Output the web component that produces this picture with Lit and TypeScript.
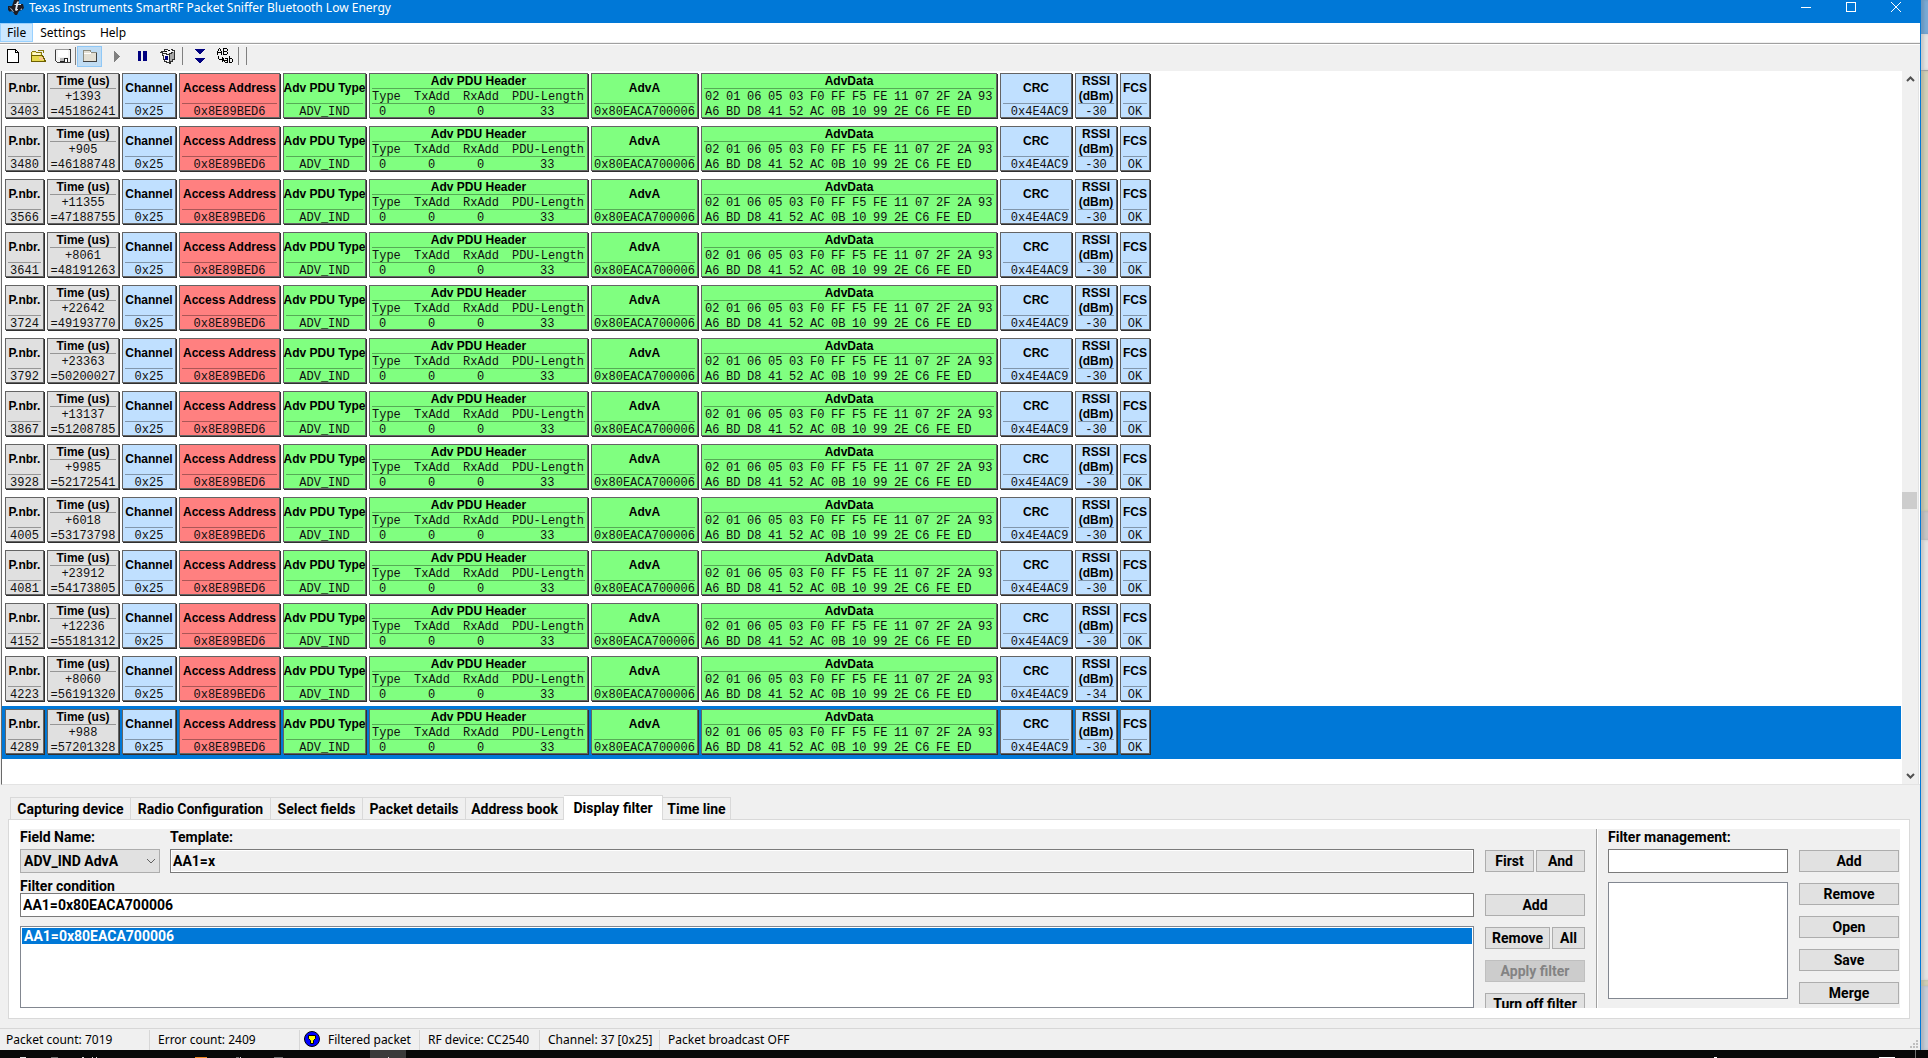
import { LitElement, html, css, svg } from "lit";
import { customElement, property, state } from "lit/decorators.js";
import { classMap } from "lit/directives/class-map.js";

interface Packet {
  nbr: string;
  delta: string;
  time: string;
  rssi: string;
}

const PACKETS: Packet[] = [
  { nbr: "3403", delta: "+1393", time: "=45186241", rssi: "-30" },
  { nbr: "3480", delta: "+905", time: "=46188748", rssi: "-30" },
  { nbr: "3566", delta: "+11355", time: "=47188755", rssi: "-30" },
  { nbr: "3641", delta: "+8061", time: "=48191263", rssi: "-30" },
  { nbr: "3724", delta: "+22642", time: "=49193770", rssi: "-30" },
  { nbr: "3792", delta: "+23363", time: "=50200027", rssi: "-30" },
  { nbr: "3867", delta: "+13137", time: "=51208785", rssi: "-30" },
  { nbr: "3928", delta: "+9985", time: "=52172541", rssi: "-30" },
  { nbr: "4005", delta: "+6018", time: "=53173798", rssi: "-30" },
  { nbr: "4081", delta: "+23912", time: "=54173805", rssi: "-30" },
  { nbr: "4152", delta: "+12236", time: "=55181312", rssi: "-30" },
  { nbr: "4223", delta: "+8060", time: "=56191320", rssi: "-34" },
  { nbr: "4289", delta: "+988", time: "=57201328", rssi: "-30" },
];

const ADV_DATA = [
  "02 01 06 05 03 F0 FF F5 FE 11 07 2F 2A 93",
  "A6 BD D8 41 52 AC 0B 10 99 2E C6 FE ED",
];

const PDU_HEADER = ["Type TxAdd RxAdd PDU-Length", "0 0 0 33"];

const TABS = [
  "Capturing device",
  "Radio Configuration",
  "Select fields",
  "Packet details",
  "Address book",
  "Display filter",
  "Time line",
];

const icon = (body: unknown) => html`<svg
  class="icon"
  width="16"
  height="16"
  viewBox="0 0 16 16"
  shape-rendering="crispEdges"
  aria-hidden="true"
>${body}</svg>`;

const ICONS = {
  blank: svg`<path d="M2.500 1.500h8l3 3v10h-11z" fill="#fff" stroke="#000"/><path d="M10.500 1.500v3h3" fill="none" stroke="#000"/>`,
  open: svg`<path d="M1.500 13.500v-9l1-1h3l1 1h5v3" fill="#f4ea8c" stroke="#8a7a10"/><path d="M1.500 13.500v-6h11l3 6z" fill="#e6d84c" stroke="#6e6000"/><path d="M9 9h4l1 3h-4z" fill="#f7c890"/><path d="M3 5h7v2h-7z" fill="#fffbd0"/><path d="M8 2.500h5v2" fill="none" stroke="#8a7a10"/>`,
  save: svg`<path d="M.500 1.500h15v13h-13l-2-2z" fill="#f4f4f4" stroke="#3c3c3c"/><path d="M3 2h10v7h-10z" fill="#fff"/><path d="M0 1h14v1h-14z" fill="#9a9a9a"/><path d="M5 10h8v4h-8z" fill="#202020"/><path d="M10 11h2v3h-2z" fill="#fff"/><path d="M5 10h4v3h-4z" fill="#b8b8b8"/>`,
  folder: svg`<path d="M1.500 13v-10l1-1h5l1 1v1h6v9z" fill="#e4e0d4" stroke="#8c8c80"/><path d="M2 5.500h6v-2" fill="none" stroke="#fff"/><path d="M1 13.500h13.500v-9" fill="none" stroke="#404040"/>`,
  play: svg`<path d="M5 3h1v1h1v1h1v1h1v1h1v1h1v1h-1v1h-1v1h-1v1h-1v1h-1v1h-1z" fill="#808080"/>`,
  pause: svg`<path d="M4 3h3v10h-3zM9 3h4v10h-4z" fill="#000080"/>`,
  clear: svg`<path d="M1 4l5-3h6l3 3v8l-5 3-7-3z" fill="#f4f4f4"/><path d="M10 6l5-2v8l-5 3z" fill="#a8a8a8"/><path d="M1 4.500h2v3h1v4h1v2h2v1h3M2 3.500h3v-2h4M12 1.500h1v1h2v9h-2v2h-2v2h-1V7M4 5.500h3v1h3v-1h2v-1h2" fill="none" stroke="#303030"/><path d="M6 8h3v4h-3z" fill="#000080"/><path d="M6 3.500h2M9 2.500h2" stroke="#000"/>`,
  down: svg`<path d="M3 1h10v1h-1v1h-1v1h-1v1h-1v1h-2v-1h-1v-1h-1v-1h-1v-1h-1zM3 10h10v1h-1v1h-1v1h-1v1h-1v1h-2v-1h-1v-1h-1v-1h-1v-1h-1z" fill="#000080"/>`,
  swap: svg`<path d="M.500 7V3M1.500 3V1M2.500 0v1M3.500 1v2M4.500 3v4M1 4.500h3M6.500 0v7M7 .500h3M10.500 1v2M7 3.500h3M10.500 4v2M7 6.500h3" fill="none" stroke="#000"/><path d="M1.500 8v3M2 11.500h5M5.500 9v5M6.500 10v3" fill="none" stroke="#000"/><path d="M8 10.500h2M10.500 10v5M8 14.500h2M7.500 12v2M8 12.500h2M12.500 8v7M13 10.500h2M15.500 11v3M13 14.500h2" fill="none" stroke="#000"/>`,
};

@customElement("packet-field")
export class PacketField extends LitElement {
  static styles = css`
    :host {
      display: block;
      box-sizing: border-box;
      height: 45px;
      border: 1px solid #646464;
      box-shadow: 1px 1px 0 #303030;
      color: #000;
      background: #e0e0e0;
    }
    :host([tone="blue"]) { background: #c0e0ff; }
    :host([tone="red"]) { background: #ff8080; }
    :host([tone="green"]) { background: #80ff80; }
    .name {
      display: flex;
      align-items: center;
      justify-content: center;
      height: 29px;
      margin: 0 2px;
      border-bottom: 1px solid rgba(0, 0, 0, 0.33);
      font: bold 12px/15px "Liberation Sans", Arial, sans-serif;
      text-align: center;
      white-space: pre;
    }
    .short { height: 14px; }
    .line {
      display: flex;
      justify-content: center;
      height: 15px;
      margin: 0 2px;
      font: 12px/17px "Liberation Mono", "Courier New", monospace;
      color: #101010;
      white-space: pre;
    }
    .bytes {
      display: grid;
      grid-template-columns: repeat(14, 21px);
      justify-content: start;
      padding-left: 1px;
    }
    .header {
      display: grid;
      grid-template-columns: 42px 49px 49px 72px;
      justify-content: start;
    }
    .header.values span { padding-left: 14px; }
    .header.values span:first-child { padding-left: 7px; }
    .header.values span:last-child { padding-left: 28px; }
    .ruled {
      box-sizing: border-box;
      border-bottom: 1px solid rgba(0, 0, 0, 0.33);
    }
  `;

  @property() name = "";
  @property({ reflect: true }) tone = "grey";
  @property() layout = "plain";
  @property({ attribute: false }) lines: string[] = [];

  render() {
    const two = this.lines.length > 1;
    const columns = this.layout !== "plain";
    const header = this.layout === "header";
    return html`<div class=${classMap({ name: true, short: two })}>${this.name}</div>
      ${this.lines.map(
        (text, i) => html`<div
          class=${classMap({
            line: true,
            bytes: this.layout === "bytes",
            header,
            values: header && i > 0,
            ruled: header && i === 0,
          })}
        >${columns ? text.split(" ").map((t) => html`<span>${t}</span>`) : text}</div>`
      )}`;
  }
}

@customElement("packet-list")
export class PacketList extends LitElement {
  static styles = css`
    :host {
      display: flex;
      flex: 1;
      min-height: 0;
      background: #fff;
      border-left: 1px solid #696969;
      margin-left: 1px;
      border-bottom: 1px solid #e3e3e3;
      box-sizing: border-box;
    }
    .rows {
      flex: 1;
      min-width: 0;
      overflow: hidden;
      padding-right: 1px;
    }
    table {
      width: 100%;
      table-layout: fixed;
      border-collapse: collapse;
    }
    td { padding: 3px 3px 5px 0; }
    td:first-child { padding-left: 3px; }
    tr:first-child td { padding-top: 2px; }
    .selected { background: #0078d7; }
    .w-nbr { width: 45px; }
    .w-time { width: 75px; }
    .w-channel { width: 57px; }
    .w-access { width: 104px; }
    .w-type { width: 86px; }
    .w-header { width: 222px; }
    .w-adva { width: 110px; }
    .w-data { width: 299px; }
    .w-crc { width: 75px; }
    .w-rssi { width: 45px; }
    .w-fcs { width: 33px; }
    .scroll {
      display: flex;
      flex-direction: column;
      width: 16px;
      background: #f0f0f0;
      border-right: 1px solid #e3e3e3;
      margin-right: 1px;
    }
    .scroll button {
      height: 17px;
      padding: 0;
      border: 0;
      background: none;
      line-height: 0;
    }
    .track {
      display: flex;
      flex-direction: column;
      flex: 1;
    }
    .before { flex: 404; }
    .thumb {
      height: 17px;
      width: 15px;
      background: #cdcdcd;
    }
    .after { flex: 258; }
  `;

  @state() private selected = "4289";

  private row(p: Packet) {
    return html`<tr
      class=${classMap({ selected: p.nbr === this.selected })}
      @click=${() => (this.selected = p.nbr)}
    >
      <td><packet-field name="P.nbr." .lines=${[p.nbr]}></packet-field></td>
      <td><packet-field name="Time (us)" .lines=${[p.delta, p.time]}></packet-field></td>
      <td><packet-field tone="blue" name="Channel" .lines=${["0x25"]}></packet-field></td>
      <td><packet-field tone="red" name="Access Address" .lines=${["0x8E89BED6"]}></packet-field></td>
      <td><packet-field tone="green" name="Adv PDU Type" .lines=${["ADV_IND"]}></packet-field></td>
      <td><packet-field tone="green" name="Adv PDU Header" layout="header" .lines=${PDU_HEADER}></packet-field></td>
      <td><packet-field tone="green" name="AdvA" .lines=${["0x80EACA700006"]}></packet-field></td>
      <td><packet-field tone="green" name="AdvData" layout="bytes" .lines=${ADV_DATA}></packet-field></td>
      <td><packet-field tone="blue" name="CRC" .lines=${[" 0x4E4AC9"]}></packet-field></td>
      <td><packet-field tone="blue" name=${"RSSI\n(dBm)"} .lines=${[p.rssi]}></packet-field></td>
      <td><packet-field tone="blue" name="FCS" .lines=${["OK"]}></packet-field></td>
      <td></td>
    </tr>`;
  }

  render() {
    return html`<div class="rows">
        <table aria-label="Packets">
          <colgroup>
            <col class="w-nbr" /><col class="w-time" /><col class="w-channel" />
            <col class="w-access" /><col class="w-type" /><col class="w-header" />
            <col class="w-adva" /><col class="w-data" /><col class="w-crc" />
            <col class="w-rssi" /><col class="w-fcs" /><col />
          </colgroup>
          <tbody>${PACKETS.map((p) => this.row(p))}</tbody>
        </table>
      </div>
      <div class="scroll">
        <button aria-label="Scroll up">
          <svg width="15" height="17" viewBox="0 0 15 17"><path d="M4 10l3.500-3.500 3.500 3.500" fill="none" stroke="#505050" stroke-width="2"/></svg>
        </button>
        <div class="track"><div class="before"></div><div class="thumb"></div><div class="after"></div></div>
        <button aria-label="Scroll down">
          <svg width="15" height="17" viewBox="0 0 15 17"><path d="M4 7l3.500 3.500 3.500-3.500" fill="none" stroke="#505050" stroke-width="2"/></svg>
        </button>
      </div>`;
  }
}

@customElement("filter-panel")
export class FilterPanel extends LitElement {
  static styles = css`
    :host {
      display: block;
      padding: 10px 10px 9px 8px;
      font: bold 14px/16px Roboto, "Liberation Sans", sans-serif;
      color: #000;
    }
    .tabs {
      display: flex;
      align-items: flex-end;
      height: 24px;
      padding-left: 2px;
    }
    .tab {
      box-sizing: border-box;
      height: 22px;
      padding: 1px 4px 0;
      border: 1px solid #d9d9d9;
      border-width: 1px 1px 0 0;
      background: #f0f0f0;
      font: inherit;
      color: inherit;
      text-align: center;
      white-space: nowrap;
    }
    .tab:first-child { border-left-width: 1px; }
    .w0 { width: 121px; }
    .w1 { width: 140px; }
    .w2 { width: 92px; }
    .w3 { width: 103px; }
    .w4 { width: 98px; }
    .w5 { width: 99px; }
    .w6 { width: 68px; }
    .active {
      height: 25px;
      margin-bottom: -1px;
      padding-bottom: 2px;
      background: #fff;
      z-index: 1;
    }
    .panel {
      border: 1px solid #d9d9d9;
      background: #fff;
      padding: 9px 9px 10px 11px;
    }
    .content {
      display: flex;
      height: 179px;
      overflow: hidden;
      background: #f0f0f0;
    }
    .conditions {
      flex: 1;
      min-width: 0;
      display: flex;
      flex-direction: column;
    }
    .pair { display: flex; gap: 10px; }
    .grow { flex: 1; min-width: 0; }
    .field { display: flex; flex-direction: column; }
    label { display: block; height: 20px; line-height: 17px; }
    .second { padding-top: 4px; height: 16px; line-height: 18px; }
    .combo { display: grid; width: 140px; }
    .combo > * { grid-area: 1 / 1; }
    .combo svg { align-self: center; justify-self: end; margin-right: 4px; pointer-events: none; }
    select, input {
      box-sizing: border-box;
      width: 100%;
      height: 24px;
      margin: 0;
      border: 1px solid #7a7a7a;
      border-radius: 0;
      padding: 0 2px 1px;
      background: #fff;
      font: inherit;
      color: inherit;
      outline: 0;
    }
    select {
      appearance: none;
      border-color: #adadad;
      background: #e1e1e1;
      padding: 0 3px;
    }
    input[readonly] { background: #f0f0f0; box-shadow: inset 0 0 0 1px #fff; }
    ul {
      box-sizing: border-box;
      flex: 1;
      margin: 9px 0 0;
      padding: 1px;
      list-style: none;
      border: 1px solid #828790;
      background: #fff;
    }
    li { padding: 0 2px; height: 16px; line-height: 17px; background: #0078d7; color: #fff; }
    .actions {
      display: flex;
      flex-direction: column;
      gap: 11px;
      width: 100px;
      padding: 21px 11px 0;
    }
    .row { display: flex; gap: 2px; }
    .row:first-child { margin-bottom: 11px; }
    .actions button {
      box-sizing: border-box;
      flex: 1 1 0;
      height: 22px;
      padding: 0;
      border: 1px solid #adadad;
      background: #e1e1e1;
      font: inherit;
      color: inherit;
    }
    .actions button.stack { flex: none; }
    .actions button.narrow { flex: 0 0 33px; }
    .actions button:disabled { background: #ccc; border-color: #bfbfbf; color: #838383; }
    .management {
      display: flex;
      border-left: 1px solid #a0a0a0;
      box-shadow: inset 1px 0 0 #fff;
      padding-left: 11px;
    }
    .saved { display: flex; flex-direction: column; width: 180px; padding-bottom: 9px; }
    .management .actions { padding-right: 1px; }
  `;

  @state() private tab = 5;
  @state() private condition = "AA1=0x80EACA700006";

  render() {
    return html`<div class="tabs" role="tablist">
        ${TABS.map(
          (name, i) => html`<button
            role="tab"
            aria-selected=${i === this.tab}
            class=${`tab w${i}${i === this.tab ? " active" : ""}`}
            @click=${() => (this.tab = i)}
          >${name}</button>`
        )}
      </div>
      <div class="panel" role="tabpanel">
        <div class="content">
          <div class="conditions">
            <div class="pair">
              <div class="field">
                <label for="field">Field Name:</label>
                <div class="combo">
                  <select id="field"><option>ADV_IND AdvA</option></select>
                  <svg width="10" height="6" viewBox="0 0 10 6"><path d="M1 1l4 4 4-4" fill="none" stroke="#606060"/></svg>
                </div>
              </div>
              <div class="field grow">
                <label for="template">Template:</label>
                <input id="template" readonly value="AA1=x" />
              </div>
            </div>
            <label class="second" for="condition">Filter condition</label>
            <input
              id="condition"
              .value=${this.condition}
              @input=${(e: Event) => (this.condition = (e.target as HTMLInputElement).value)}
            />
            <ul role="listbox" aria-label="Filter conditions">
              <li role="option" aria-selected="true">AA1=0x80EACA700006</li>
            </ul>
          </div>
          <div class="actions">
            <div class="row"><button>First</button><button>And</button></div>
            <button class="stack">Add</button>
            <div class="row"><button>Remove</button><button class="narrow">All</button></div>
            <button class="stack" disabled>Apply filter</button>
            <button class="stack">Turn off filter</button>
          </div>
          <div class="management">
            <div class="saved">
              <label for="manage">Filter management:</label>
              <input id="manage" />
              <ul role="listbox" aria-label="Saved filters"></ul>
            </div>
            <div class="actions">
              ${["Add", "Remove", "Open", "Save", "Merge"].map(
                (t) => html`<button class="stack">${t}</button>`
              )}
            </div>
          </div>
        </div>
      </div>`;
  }
}

@customElement("app-root")
export class AppRoot extends LitElement {
  static styles = css`
    :host {
      display: flex;
      flex-direction: column;
      height: 100vh;
      overflow: hidden;
      font: 12px/16px "Noto Sans", "Open Sans", sans-serif;
      color: #000;
    }
    .desktop { display: flex; flex: 1; min-height: 0; }
    .window {
      display: flex;
      flex-direction: column;
      flex: 1;
      min-width: 0;
      background: #f0f0f0;
      border-right: 1px solid #0078d7;
    }
    .title {
      display: flex;
      height: 23px;
      padding: 0 2px 0 8px;
      background: #0078d7;
      color: #fff;
    }
    .title h1 {
      flex: 1;
      margin: 0 0 0 5px;
      font: inherit;
      line-height: 15px;
    }
    .title button {
      width: 45px;
      height: 15px;
      padding: 0;
      border: 0;
      background: none;
      line-height: 0;
    }
    .menu { display: flex; height: 19px; background: #fff; }
    .menu button {
      box-sizing: border-box;
      padding: 0 6px;
      border: 1px solid transparent;
      background: none;
      font: inherit;
      line-height: 17px;
      color: inherit;
    }
    .menu .open { border-color: #99d1ff; background: #cce8ff; }
    .toolbar {
      display: flex;
      align-items: center;
      height: 24px;
      margin-top: 1px;
      border-top: 1px solid #a0a0a0;
      box-shadow: inset 0 1px 0 #fff;
      padding-bottom: 3px;
    }
    .toolbar button {
      box-sizing: border-box;
      width: 25px;
      height: 21px;
      padding: 0;
      border: 1px solid transparent;
      background: none;
      line-height: 0;
    }
    .toolbar .pressed { margin-right: 2px; border-color: #90c8f6; background: #c0dcf3; }
    .sep { width: 1px; height: 18px; background: #808080; margin: 0 4px 0 3px; }
    .tight { margin: 0 1px 0 0; }
    .spaced { margin: 0 7px 0 1px; }
    .icon { display: inline-block; }
    .status {
      display: flex;
      height: 21px;
      border-top: 1px solid #d7d7d7;
      line-height: 20px;
    }
    .status div {
      box-sizing: border-box;
      width: 120px;
      margin-top: 1px;
      padding-left: 8px;
      border-right: 1px solid #d7d7d7;
      white-space: nowrap;
    }
    .status .wide { width: 150px; }
    .status .wide:first-child { padding-left: 6px; }
    .status .marked { display: flex; gap: 8px; padding-left: 4px; }
    .status .marked svg { flex: none; margin-top: 1px; }
    .status .last { flex: 1; border: 0; }
    .grip { align-self: flex-end; margin: 0 2px 2px 0; }
    .backdrop {
      display: flex;
      flex-direction: column;
      width: 7px;
    }
    .backdrop i {
      display: block;
      box-shadow: inset 3px 0 3px rgba(0, 0, 0, 0.12);
    }
    .b1 { flex: 34; background: #78aad6; }
    .b2 { flex: 36; background: #e4e4e4; }
    .b3 { flex: 440; background: #d0d0b8; border-top: 1px solid #a0a0a0; }
    .b4 { flex: 30; background: #c6c6c6; }
    .b5 { flex: 440; background: #e4e4e4; }
    .b6 { flex: 6; background: #d0d0b8; }
    .b7 { flex: 64; background: #c6cdd8; }
    .taskbar {
      display: flex;
      justify-content: space-between;
      height: 8px;
      background: #080808;
    }
  `;

  render() {
    return html`<div class="desktop">
        <div class="window">
          <header class="title">
            <svg width="16" height="15" viewBox="0 0 16 15" aria-hidden="true">
              <path d="M6 0h5v4h4l1 4-2 2-3 1-2 4h-2l-2-3-2-1-1 1-4-4 1-2h5z" fill="#1c1c24"/>
              <path d="M10 1l1 1-1 2h3v1h-3l-1 4h1v1l-2 1-1-1 1-5h-2l1-1h1l1-2z" fill="#e4e8f0"/>
              <path d="M1 7l3 2 2 3-1 0zM12 10l2-2v2z" fill="#9aa6b8"/>
            </svg>
            <h1>Texas Instruments SmartRF Packet Sniffer Bluetooth Low Energy</h1>
            <button aria-label="Minimize"><svg width="10" height="15" shape-rendering="crispEdges"><path d="M0 7.500h10" stroke="#fff"/></svg></button>
            <button aria-label="Maximize"><svg width="10" height="15" shape-rendering="crispEdges"><path d="M.5 2.500h9v9h-9z" fill="none" stroke="#fff"/></svg></button>
            <button aria-label="Close"><svg width="10" height="15"><path d="M0 2l10 10M10 2l-10 10" stroke="#fff"/></svg></button>
          </header>
          <nav class="menu">
            <button class="open">File</button><button>Settings</button><button>Help</button>
          </nav>
          <div class="toolbar" role="toolbar">
            <button aria-label="New">${icon(ICONS.blank)}</button>
            <button aria-label="Open">${icon(ICONS.open)}</button>
            <button aria-label="Save">${icon(ICONS.save)}</button>
            <span class="sep tight"></span>
            <button class="pressed" aria-label="Buffer">${icon(ICONS.folder)}</button>
            <button aria-label="Start">${icon(ICONS.play)}</button>
            <button aria-label="Pause">${icon(ICONS.pause)}</button>
            <button aria-label="Clear">${icon(ICONS.clear)}</button>
            <span class="sep"></span>
            <button aria-label="Scroll to end">${icon(ICONS.down)}</button>
            <button aria-label="Rename">${icon(ICONS.swap)}</button>
            <span class="sep spaced"></span>
            <span class="sep tight"></span>
          </div>
          <packet-list></packet-list>
          <filter-panel></filter-panel>
          <footer class="status">
            <div class="wide">Packet count: 7019</div>
            <div class="wide">Error count: 2409</div>
            <div class="marked">
              <svg width="16" height="16" viewBox="0 0 16 16" aria-hidden="true">
                <circle cx="8" cy="8" r="7.500" fill="#0000ff" stroke="#000"/>
                <path d="M4.500 4.500h7v3l-2 2v3h-3v-3l-2-2z" fill="#ffff00" stroke="#000"/>
              </svg>Filtered packet
            </div>
            <div>RF device: CC2540</div>
            <div>Channel: 37 [0x25]</div>
            <div class="last">Packet broadcast OFF</div>
            <svg class="grip" width="8" height="8" shape-rendering="crispEdges" aria-hidden="true">
              <path d="M6 0h2v2h-2zM3 3h2v2h-2zM6 3h2v2h-2zM0 6h2v2h-2zM3 6h2v2h-2zM6 6h2v2h-2z" fill="#bfbfbf"/>
            </svg>
          </footer>
        </div>
        <div class="backdrop" aria-hidden="true">
          <i class="b1"></i><i class="b2"></i><i class="b3"></i><i class="b4"></i><i class="b5"></i><i class="b6"></i><i class="b7"></i>
        </div>
      </div>
      <div class="taskbar" aria-hidden="true">
        <svg width="420" height="8" shape-rendering="crispEdges">
          <path d="M370 0h36v8h-36z" fill="#3a3a3a"/>
          <path d="M195 7h12v1h-12z" fill="#f08a24"/>
          <path d="M20 7h6v1h-6zM82 7h2v1h-2zM92 7h1v1h-1zM96 7h1v1h-1zM240 7h1v1h-1zM388 7h1v1h-1z" fill="#e0e0e0"/>
          <path d="M51 7h7v1h-7zM236 7h3v1h-3zM274 7h9v1h-9z" fill="#707070"/>
        </svg>
        <svg width="220" height="8" shape-rendering="crispEdges">
          <path d="M207 0h1v8h-1z" fill="#707070"/>
          <path d="M171 7h16v1h-16zM6 7h3v1h-3z" fill="#fff"/>
        </svg>
      </div>`;
  }
}
